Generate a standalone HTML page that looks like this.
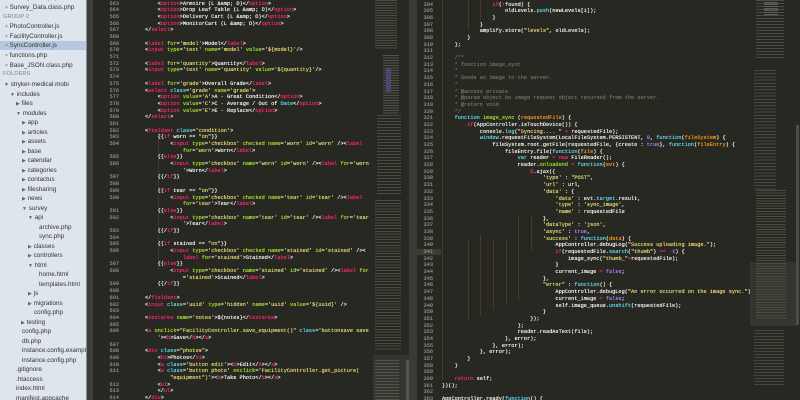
<!DOCTYPE html>
<html><head><meta charset="utf-8"><style>
*{margin:0;padding:0;box-sizing:border-box}
body{width:800px;height:400px;overflow:hidden;background:#272822;position:relative;font-family:"Liberation Sans",sans-serif}
#side{position:absolute;left:0;top:0;width:86px;height:400px;background:#dfe5ed;overflow:hidden}
#side div{position:absolute;font-size:6.3px;color:#333;white-space:nowrap;line-height:9px;height:9px}
#side .h{color:#7d8590;font-size:5.8px}
#side .sel{left:0;width:86px;background:#b6c8de}
.tri{color:#666;font-size:5px}
#sep1{position:absolute;left:86px;top:0;width:7px;height:400px;background:#3d3d39;border-left:1px solid #8a8f96}
#sep2{position:absolute;left:409px;top:0;width:8px;height:400px;background:#3a3a36}
.ed{position:absolute;top:0;height:400px;overflow:hidden}
.ln,.code{position:absolute;font-family:"Liberation Mono",monospace;font-size:5.25px;line-height:6.68px;white-space:pre;text-shadow:0 0 0.4px currentColor}
.ln{color:#8f908a;text-align:right}
.code{color:#f8f8f2}
.p{color:#f92672}.s{color:#e6db74}.g{color:#a6e22e}.c{color:#66d9ef}.v{color:#ae81ff}.o{color:#fd971f}.m{color:#75715e}
.mm{position:absolute;height:1.2px}
</style></head><body>
<div id="side">
<div style="left:11px;top:-7px">Survey.class.php</div>
<div style="left:5px;top:2.5px"><span class="tri">×</span>&nbsp;Survey_Data.class.php</div>
<div class="h" style="left:3px;top:12.5px">GROUP 2</div>
<div style="left:5px;top:22px"><span class="tri">×</span>&nbsp;PhotoController.js</div>
<div style="left:5px;top:31.5px"><span class="tri">×</span>&nbsp;FacilityController.js</div>
<div class="sel" style="top:41px;padding-left:5px"><span class="tri">×</span>&nbsp;SyncController.js</div>
<div style="left:5px;top:51px"><span class="tri">×</span>&nbsp;functions.php</div>
<div style="left:5px;top:60.5px"><span class="tri">×</span>&nbsp;Base_JSON.class.php</div>
<div class="h" style="left:3px;top:70px">FOLDERS</div>
<div style="left:4px;top:80px"><span class="tri">▼</span> stryker-medical.mobi</div>
<div style="left:10px;top:89.5px"><span class="tri">▼</span> includes</div>
<div style="left:16px;top:99px"><span class="tri">▶</span> files</div>
<div style="left:16px;top:108.5px"><span class="tri">▼</span> modules</div>
<div style="left:22px;top:118px"><span class="tri">▶</span> app</div>
<div style="left:22px;top:127.5px"><span class="tri">▶</span> articles</div>
<div style="left:22px;top:137px"><span class="tri">▶</span> assets</div>
<div style="left:22px;top:146.5px"><span class="tri">▶</span> base</div>
<div style="left:22px;top:156px"><span class="tri">▶</span> calendar</div>
<div style="left:22px;top:165.5px"><span class="tri">▶</span> categories</div>
<div style="left:22px;top:175px"><span class="tri">▶</span> contactus</div>
<div style="left:22px;top:184.5px"><span class="tri">▶</span> filesharing</div>
<div style="left:22px;top:194px"><span class="tri">▶</span> news</div>
<div style="left:22px;top:203.5px"><span class="tri">▼</span> survey</div>
<div style="left:28px;top:213px"><span class="tri">▼</span> api</div>
<div style="left:39px;top:222.5px">archive.php</div>
<div style="left:39px;top:232px">sync.php</div>
<div style="left:28px;top:241.5px"><span class="tri">▶</span> classes</div>
<div style="left:28px;top:251px"><span class="tri">▶</span> controllers</div>
<div style="left:28px;top:260.5px"><span class="tri">▼</span> html</div>
<div style="left:39px;top:270px">home.html</div>
<div style="left:39px;top:279.5px">templates.html</div>
<div style="left:28px;top:289px"><span class="tri">▶</span> js</div>
<div style="left:28px;top:298.5px"><span class="tri">▶</span> migrations</div>
<div style="left:34px;top:308px">config.php</div>
<div style="left:21px;top:317.5px"><span class="tri">▶</span> testing</div>
<div style="left:22px;top:327px">config.php</div>
<div style="left:22px;top:336.5px">db.php</div>
<div style="left:22px;top:346px">instance.config.example</div>
<div style="left:22px;top:355.5px">instance.config.php</div>
<div style="left:16px;top:365px">.gitignore</div>
<div style="left:16px;top:374.5px">.htaccess</div>
<div style="left:16px;top:384px">index.html</div>
<div style="left:16px;top:393.5px">manifest.appcache</div>
</div>
<div id="sep1"></div>

<div class="ed" style="left:93px;width:316px">
<div class="ln" style="left:0;width:26px;top:0.6px">563
564
565
566
567
568
569
570
571
572
573
574
575
576
577
578
579
580
581
582
583
584

585
586

587
588
589
590

591
592

593
594
595
596

597
598

599
600
601
602
603
604
605
606

607
608
609
610
611

612
613
614</div>
<div style="position:absolute;left:65px;top:130px;width:1px;height:140px;background:#3b3a32"></div>
<div class="code" style="left:52px;top:0.6px;width:225px;overflow:hidden">    &lt;<span class="p">option</span>&gt;Armoire (L &amp;amp; D)&lt;/<span class="p">option</span>&gt;
    &lt;<span class="p">option</span>&gt;Drop Leaf Table (L &amp;amp; D)&lt;/<span class="p">option</span>&gt;
    &lt;<span class="p">option</span>&gt;Delivery Cart (L &amp;amp; D)&lt;/<span class="p">option</span>&gt;
    &lt;<span class="p">option</span>&gt;MonitorCart (L &amp;amp; D)&lt;/<span class="p">option</span>&gt;
&lt;/<span class="p">select</span>&gt;

&lt;<span class="p">label</span> <span class="g">for</span>=<span class="s">'model'</span>&gt;Model&lt;/<span class="p">label</span>&gt;
&lt;<span class="p">input</span> <span class="g">type</span>=<span class="s">'text'</span> <span class="g">name</span>=<span class="s">'model'</span> <span class="g">value</span>=<span class="s">'${model}'</span>/&gt;

&lt;<span class="p">label</span> <span class="g">for</span>=<span class="s">'quantity'</span>&gt;Quantity&lt;/<span class="p">label</span>&gt;
&lt;<span class="p">input</span> <span class="g">type</span>=<span class="s">'text'</span> <span class="g">name</span>=<span class="s">'quantity'</span> <span class="g">value</span>=<span class="s">'${quantity}'</span>/&gt;

&lt;<span class="p">label</span> <span class="g">for</span>=<span class="s">'grade'</span>&gt;Overall Grade&lt;/<span class="p">label</span>&gt;
&lt;<span class="p">select</span> <span class="c">class</span>=<span class="s">'grade'</span> <span class="g">name</span>=<span class="s">'grade'</span>&gt;
    &lt;<span class="p">option</span> <span class="g">value</span>=<span class="s">'A'</span>&gt;A - Great Condition&lt;/<span class="p">option</span>&gt;
    &lt;<span class="p">option</span> <span class="g">value</span>=<span class="s">'C'</span>&gt;C - Average / Out of <span class="c">Date</span>&lt;/<span class="p">option</span>&gt;
    &lt;<span class="p">option</span> <span class="g">value</span>=<span class="s">'E'</span>&gt;E - Replace&lt;/<span class="p">option</span>&gt;
&lt;/<span class="p">select</span>&gt;

&lt;<span class="p">fieldset</span> <span class="c">class</span>=<span class="s">'condition'</span>&gt;
    {{<span class="p">if</span> worn == <span class="s">"on"</span>}}
        &lt;<span class="p">input</span> <span class="g">type</span>=<span class="s">'checkbox'</span> <span class="g">checked</span> <span class="g">name</span>=<span class="s">'worn'</span> <span class="g">id</span>=<span class="s">'worn'</span> /&gt;&lt;<span class="p">label</span>
            <span class="g">for</span>=<span class="s">'worn'</span>&gt;Worn&lt;/<span class="p">label</span>&gt;
    {{<span class="p">else</span>}}
        &lt;<span class="p">input</span> <span class="g">type</span>=<span class="s">'checkbox'</span> <span class="g">name</span>=<span class="s">'worn'</span> <span class="g">id</span>=<span class="s">'worn'</span> /&gt;&lt;<span class="p">label</span> <span class="g">for</span>=<span class="s">'worn</span>
<span class="s">            '</span>&gt;Worn&lt;/<span class="p">label</span>&gt;
    {{/<span class="p">if</span>}}

    {{<span class="p">if</span> tear == <span class="s">"on"</span>}}
        &lt;<span class="p">input</span> <span class="g">type</span>=<span class="s">'checkbox'</span> <span class="g">checked</span> <span class="g">name</span>=<span class="s">'tear'</span> <span class="g">id</span>=<span class="s">'tear'</span> /&gt;&lt;<span class="p">label</span>
            <span class="g">for</span>=<span class="s">'tear'</span>&gt;Tear&lt;/<span class="p">label</span>&gt;
    {{<span class="p">else</span>}}
        &lt;<span class="p">input</span> <span class="g">type</span>=<span class="s">'checkbox'</span> <span class="g">name</span>=<span class="s">'tear'</span> <span class="g">id</span>=<span class="s">'tear'</span> /&gt;&lt;<span class="p">label</span> <span class="g">for</span>=<span class="s">'tear</span>
<span class="s">            '</span>&gt;Tear&lt;/<span class="p">label</span>&gt;
    {{/<span class="p">if</span>}}

    {{<span class="p">if</span> stained == <span class="s">"on"</span>}}
        &lt;<span class="p">input</span> <span class="g">type</span>=<span class="s">'checkbox'</span> <span class="g">checked</span> <span class="g">name</span>=<span class="s">'stained'</span> <span class="g">id</span>=<span class="s">'stained'</span> /&gt;&lt;
            <span class="p">label</span> <span class="g">for</span>=<span class="s">'stained'</span>&gt;Stained&lt;/<span class="p">label</span>&gt;
    {{<span class="p">else</span>}}
        &lt;<span class="p">input</span> <span class="g">type</span>=<span class="s">'checkbox'</span> <span class="g">name</span>=<span class="s">'stained'</span> <span class="g">id</span>=<span class="s">'stained'</span> /&gt;&lt;<span class="p">label</span> <span class="g">for</span>
            =<span class="s">'stained'</span>&gt;Stained&lt;/<span class="p">label</span>&gt;
    {{/<span class="p">if</span>}}

&lt;/<span class="p">fieldset</span>&gt;
&lt;<span class="p">input</span> <span class="c">class</span>=<span class="s">'uuid'</span> <span class="g">type</span>=<span class="s">'hidden'</span> <span class="g">name</span>=<span class="s">'uuid'</span> <span class="g">value</span>=<span class="s">'${uuid}'</span> /&gt;

&lt;<span class="p">textarea</span> <span class="g">name</span>=<span class="s">'notes'</span>&gt;${notes}&lt;/<span class="p">textarea</span>&gt;

&lt;<span class="p">a</span> <span class="g">onclick</span>=<span class="s">"FacilityController.save_equipment()"</span> <span class="c">class</span>=<span class="s">'buttonsave save</span>
<span class="s">    '</span>&gt;&lt;<span class="p">b</span>&gt;Save&lt;/<span class="p">b</span>&gt;&lt;/<span class="p">a</span>&gt;

&lt;<span class="p">div</span> <span class="c">class</span>=<span class="s">"photos"</span>&gt;
    &lt;<span class="p">h1</span>&gt;Photos&lt;/<span class="p">h1</span>&gt;
    &lt;<span class="p">a</span> <span class="c">class</span>=<span class="s">'button edit'</span>&gt;&lt;<span class="p">b</span>&gt;Edit&lt;/<span class="p">b</span>&gt;&lt;/<span class="p">a</span>&gt;
    &lt;<span class="p">a</span> <span class="c">class</span>=<span class="s">'button photo'</span> <span class="g">onclick</span>=<span class="s">'FacilityController.get_picture(</span>
<span class="s">        "equipment")'</span>&gt;&lt;<span class="p">b</span>&gt;Take Photo&lt;/<span class="p">b</span>&gt;&lt;/<span class="p">a</span>&gt;
    &lt;<span class="p">ul</span>&gt;
    &lt;/<span class="p">ul</span>&gt;
&lt;/<span class="p">div</span>&gt;</div>
<!-- minimap left -->
<div style="position:absolute;left:280px;top:0;width:36px;height:400px">
<div style="position:absolute;left:0;top:355px;width:36px;height:45px;background:#35352f"></div>
<div style="position:absolute;left:2px;top:0;width:22px;height:50px;background:repeating-linear-gradient(#4e4c44 0 1px,transparent 1px 2.5px)"></div>
<div style="position:absolute;left:10px;top:55px;width:16px;height:60px;background:repeating-linear-gradient(#55544d 0 1px,transparent 1px 2.5px)"></div>
<div style="position:absolute;left:13px;top:68px;width:5px;height:24px;background:#4f4670"></div>
<div style="position:absolute;left:4px;top:115px;width:24px;height:80px;background:repeating-linear-gradient(#4a4942 0 1px,transparent 1px 3px)"></div>
<div style="position:absolute;left:2px;top:200px;width:26px;height:150px;background:repeating-linear-gradient(#4c4a42 0 1px,transparent 1px 2.8px)"></div>
<div style="position:absolute;left:2px;top:360px;width:24px;height:40px;background:repeating-linear-gradient(#55544c 0 1px,transparent 1px 3px)"></div>
<div style="position:absolute;right:0;top:360px;width:3px;height:40px;background:#55554f"></div>
</div>
</div>
<div id="sep2"></div>

<div class="ed" style="left:417px;width:383px">
<div style="position:absolute;left:0;top:248.8px;width:24px;height:6.7px;background:#3e3d32"></div>
<div class="ln" style="left:0;width:16px;top:1.6px">304
305
306
307
308
309
310
311
312
313
314
315
316
317
318
319
320
321
322
323
324
325
326
327
328
329
330
331
332
333
334
335
336
337
338
339
340
341
342
343
344
345
346
347
348
349
350
351
352
353
354
355
356
357
358
359
360
361
362
363</div>
<div style="position:absolute;left:25px;top:0;width:1px;height:380px;background:#4a3a22"></div>
<div style="position:absolute;left:50.5px;top:0;width:1px;height:30px;background:#4a3a22"></div>
<div style="position:absolute;left:50.5px;top:240px;width:1px;height:80px;background:#4a3a22"></div>
<div style="position:absolute;left:63px;top:0;width:1px;height:20px;background:#4a3a22"></div>
<div style="position:absolute;left:63px;top:235px;width:1px;height:80px;background:#4a3a22"></div>
<div style="position:absolute;left:76px;top:240px;width:1px;height:70px;background:#4a3a22"></div>
<div style="position:absolute;left:88.5px;top:240px;width:1px;height:65px;background:#4a3a22"></div>
<div style="position:absolute;left:101px;top:215px;width:1px;height:85px;background:#4a3a22"></div>
<div style="position:absolute;left:114px;top:215px;width:1px;height:35px;background:#4a3a22"></div>
<div class="code" style="left:25px;top:1.6px;width:308px;overflow:hidden">                <span class="p">if</span>(<span class="p">!</span>found) {
                    oldLevels.<span class="c">push</span>(newLevels[i]);
                }
            }
            amplify.store(<span class="s">"levels"</span>, oldLevels);
        }
    };

    <span class="m">/**</span>
<span class="m">    * function image_sync</span>
<span class="m">    *</span>
<span class="m">    * Sends an image to the server.</span>
<span class="m">    *</span>
<span class="m">    * @access private</span>
<span class="m">    * @param object An image request object returned from the server.</span>
<span class="m">    * @return void</span>
<span class="m">    */</span>
    <span class="c">function</span> <span class="g">image_sync</span> (<span class="o">requestedFile</span>) {
        <span class="p">if</span>(AppController.isTouchDevice()) {
            console.<span class="c">log</span>(<span class="s">"Syncing.... "</span> <span class="p">+</span> requestedFile);
            <span class="c">window</span>.requestFileSystem(LocalFileSystem.PERSISTENT, <span class="v">0</span>, <span class="c">function</span>(<span class="o">fileSystem</span>) {
                fileSystem.root.getFile(requestedFile, {create : <span class="v">true</span>}, <span class="c">function</span>(<span class="o">fileEntry</span>) {
                    fileEntry.file(<span class="c">function</span>(<span class="o">file</span>) {
                        <span class="c">var</span> reader <span class="p">=</span> <span class="p">new</span> FileReader();
                        reader.<span class="g">onloadend</span> <span class="p">=</span> <span class="c">function</span>(<span class="o">evt</span>) {
                            <span class="p">$</span>.ajax({
                                <span class="s">'type'</span> : <span class="s">"POST"</span>,
                                <span class="s">'url'</span> : url,
                                <span class="s">'data'</span> : {
                                    <span class="s">'data'</span> : evt.<span class="c">target</span>.result,
                                    <span class="s">'type'</span> : <span class="s">'sync_image'</span>,
                                    <span class="s">'name'</span> : requestedFile
                                },
                                <span class="s">'dataType'</span> : <span class="s">'json'</span>,
                                <span class="s">'async'</span> : <span class="v">true</span>,
                                <span class="s">'success'</span> : <span class="c">function</span>(<span class="o">data</span>) {
                                    AppController.debugLog(<span class="s">"Success uploading image."</span>);
                                    <span class="p">if</span>(requestedFile.<span class="c">search</span>(<span class="s">"thumb"</span>) <span class="p">==</span> <span class="p">-</span><span class="v">1</span>) {
                                        image_sync(<span class="s">"thumb_"</span><span class="p">+</span>requestedFile);
                                    }
                                    current_image <span class="p">=</span> <span class="v">false</span>;
                                },
                                <span class="s">"error"</span> : <span class="c">function</span>() {
                                    AppController.debugLog(<span class="s">"An error occurred on the image sync."</span>);
                                    current_image <span class="p">=</span> <span class="v">false</span>;
                                    self.image_queue.<span class="c">unshift</span>(requestedFile);
                                }
                            });
                        };
                        reader.readAsText(file);
                    }, error);
                }, error);
            }, error);
        }
    }

    <span class="p">return</span> self;
})();

AppController.ready(<span class="c">function</span>() {</div>
<!-- minimap right -->
<div style="position:absolute;left:333px;top:0;width:50px;height:400px">
<div style="position:absolute;left:0;top:262px;width:47px;height:64px;background:#35352f"></div>
<div style="position:absolute;left:6px;top:0;width:28px;height:60px;background:repeating-linear-gradient(#4c4b45 0 1px,transparent 1px 3px)"></div>
<div style="position:absolute;left:14px;top:2px;width:14px;height:14px;background:repeating-linear-gradient(#5e5d58 0 1px,transparent 1px 2px)"></div>
<div style="position:absolute;left:4px;top:70px;width:22px;height:120px;background:repeating-linear-gradient(#47463f 0 1px,transparent 1px 3.2px)"></div>
<div style="position:absolute;left:6px;top:190px;width:30px;height:130px;background:repeating-linear-gradient(#4d4b43 0 1px,transparent 1px 2.6px)"></div>
<div style="position:absolute;left:4px;top:330px;width:30px;height:55px;background:repeating-linear-gradient(#47463f 0 1px,transparent 1px 3px)"></div>
<div style="position:absolute;left:46px;top:125px;width:3px;height:200px;background:#4d4d48"></div>
</div>
</div>
</body></html>
